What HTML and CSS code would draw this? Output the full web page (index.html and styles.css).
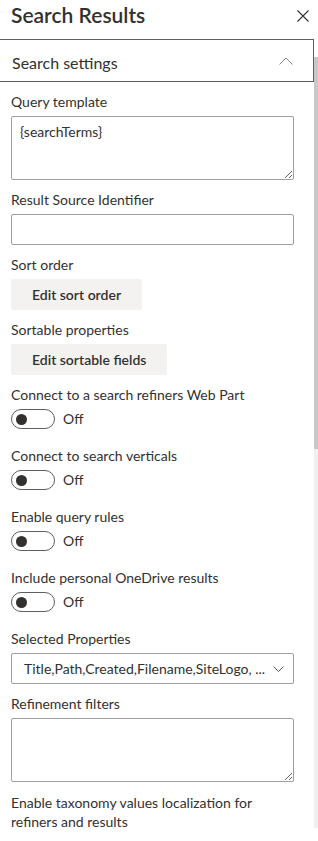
FILE: index.html
```html
<!doctype html>
<html lang="en">

<head>
    <meta charset="UTF-8" />
    <meta name="viewport" content="width=device-width, initial-scale=1.0" />
    <title>Search Results</title>
    <link rel="stylesheet" href="styles.css">
</head>

<body>
    <div class="pane">
        <div class="pane-header">
            <h1 class="pane-title">Search Results</h1>
            <button type="button" class="close-btn" aria-label="Close">
                <svg width="12" height="12" viewBox="0 0 12 12">
                    <path d="M0.5 0.5 L11.5 11.5 M11.5 0.5 L0.5 11.5" stroke="#323130" stroke-width="1.1" fill="none" />
                </svg>
            </button>
        </div>

        <div class="pane-body">
            <div class="pane-content">
                <button type="button" class="group-header">
                    <span>Search settings</span>
                    <svg width="14" height="8" viewBox="0 0 14 8">
                        <path d="M0.5 7.5 L7 1 L13.5 7.5" stroke="#8a8886" stroke-width="1" fill="none" />
                    </svg>
                </button>

                <div class="group">
                    <div class="field">
                        <label for="query-template">Query template</label>
                        <textarea id="query-template">{searchTerms}</textarea>
                    </div>
                    <div class="field">
                        <label for="source-id">Result Source Identifier</label>
                        <input type="text" id="source-id" />
                    </div>
                    <div class="field">
                        <label>Sort order</label>
                        <button type="button" class="btn">Edit sort order</button>
                    </div>
                    <div class="field">
                        <label>Sortable properties</label>
                        <button type="button" class="btn">Edit sortable fields</button>
                    </div>
                    <div class="field toggle-field">
                        <label>Connect to a search refiners Web Part</label>
                        <div class="toggle"><span class="pill"><span class="knob"></span></span><span class="toggle-text">Off</span></div>
                    </div>
                    <div class="field toggle-field">
                        <label>Connect to search verticals</label>
                        <div class="toggle"><span class="pill"><span class="knob"></span></span><span class="toggle-text">Off</span></div>
                    </div>
                    <div class="field toggle-field">
                        <label>Enable query rules</label>
                        <div class="toggle"><span class="pill"><span class="knob"></span></span><span class="toggle-text">Off</span></div>
                    </div>
                    <div class="field toggle-field">
                        <label>Include personal OneDrive results</label>
                        <div class="toggle"><span class="pill"><span class="knob"></span></span><span class="toggle-text">Off</span></div>
                    </div>
                    <div class="field">
                        <label>Selected Properties</label>
                        <div class="dropdown">
                            <span class="dropdown-text">Title,Path,Created,Filename,SiteLogo, ...</span>
                            <svg width="11" height="6" viewBox="0 0 11 6">
                                <path d="M0.5 0.5 L5.5 5.5 L10.5 0.5" stroke="#605e5c" stroke-width="1" fill="none" />
                            </svg>
                        </div>
                    </div>
                    <div class="field">
                        <label for="refinement-filters">Refinement filters</label>
                        <textarea id="refinement-filters"></textarea>
                    </div>
                    <div class="field">
                        <label class="label-wrap">Enable taxonomy values localization for refiners and results</label>
                    </div>
                </div>
            </div>

            <div class="scrollbar">
                <div class="scroll-track">
                    <div class="scroll-thumb"></div>
                </div>
            </div>
        </div>
    </div>
</body>

</html>
```

FILE: styles.css
```css
body {
    margin: 0;
    font-family: "Segoe UI", Lato, "Noto Sans", sans-serif;
    color: #323130;
    background: #fff;
}

.pane {
    width: 318px;
    height: 841px;
    display: flex;
    flex-direction: column;
    overflow: hidden;
}

.pane-header {
    height: 39px;
    flex: none;
    display: flex;
    align-items: flex-start;
    justify-content: space-between;
    padding: 1px 0 0 11px;
    box-sizing: border-box;
}

.pane-title {
    margin: 0;
    font-size: 21px;
    line-height: 28px;
    font-weight: 600;
}

.close-btn {
    border: 0;
    background: none;
    padding: 0;
    margin: 9px 9px 0 0;
    width: 12px;
    height: 12px;
    display: flex;
    cursor: pointer;
}

.pane-body {
    flex: 1;
    min-height: 0;
    display: flex;
}

.pane-content {
    flex: 1;
    min-width: 0;
    overflow: hidden;
}

.scrollbar {
    width: 4px;
    flex: none;
    display: flex;
    flex-direction: column;
    padding: 18px 0 13px;
}

.scroll-track {
    flex: 1;
    background: #f0f0f0;
}

.scroll-thumb {
    height: 392px;
    background: #c8c8c8;
}

.group-header {
    display: flex;
    align-items: center;
    justify-content: space-between;
    width: calc(100% + 1px);
    margin-left: -1px;
    height: 43px;
    padding: 4px 20px 0 12px;
    box-sizing: border-box;
    border: 1px solid #605e5c;
    background: #fff;
    font-family: inherit;
    font-size: 16px;
    color: #323130;
    text-align: left;
    cursor: pointer;
}

.group-header svg {
    margin-top: -4px;
}

.group {
    padding: 5px 20px 0 11px;
}

.field {
    margin-bottom: 5px;
}

.field label {
    display: block;
    font-size: 14px;
    line-height: 20px;
    padding: 5px 0 4px;
}

.field .label-wrap {
    line-height: 19px;
    padding-top: 6px;
}

.field textarea,
.field input {
    display: block;
    width: 100%;
    margin: 0;
    box-sizing: border-box;
    border: 1px solid #a19f9d;
    border-radius: 2px;
    font-family: inherit;
    font-size: 14px;
    color: #323130;
    padding: 6px 8px;
}

.field textarea {
    height: 64px;
    resize: vertical;
}

.field input {
    height: 31px;
}

.btn {
    display: block;
    margin: 0;
    height: 31px;
    padding: 0 21px;
    border: 0;
    border-radius: 2px;
    background: #f3f2f1;
    font-family: inherit;
    font-size: 14px;
    font-weight: 600;
    color: #323130;
    cursor: pointer;
}

.toggle-field {
    margin-bottom: 12px;
}

.toggle {
    display: flex;
    align-items: center;
    gap: 8px;
}

.pill {
    width: 44px;
    height: 20px;
    box-sizing: border-box;
    border: 1px solid #605e5c;
    border-radius: 10px;
    display: flex;
    align-items: center;
    padding-left: 4px;
}

.knob {
    width: 11px;
    height: 11px;
    border-radius: 50%;
    background: #323130;
}

.toggle-text {
    font-size: 14px;
    line-height: 20px;
}

.dropdown {
    height: 31px;
    box-sizing: border-box;
    border: 1px solid #a19f9d;
    border-radius: 2px;
    display: flex;
    align-items: center;
    justify-content: space-between;
    padding: 0 9px 0 12px;
    font-size: 14px;
}

.dropdown-text {
    white-space: nowrap;
    overflow: hidden;
}
```
